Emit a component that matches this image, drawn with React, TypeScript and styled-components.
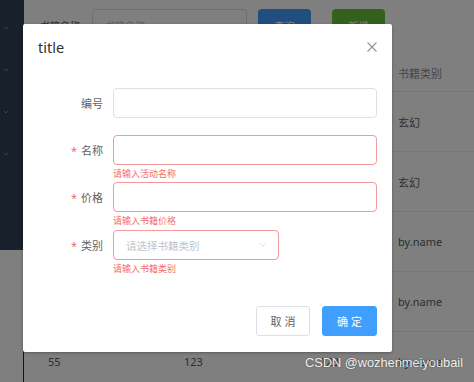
import * as React from "react";
import styled, { createGlobalStyle } from "styled-components";
import { ChevronDown } from "lucide-react";

const GlobalStyle = createGlobalStyle`
    html, body {
        margin: 0;
        padding: 0;
        width: 474px;
        height: 382px;
        overflow: hidden;
        font-family: "Noto Sans", "Noto Sans CJK SC", sans-serif;
    }
`;

const Page = styled.div`
    position: relative;
    display: flex;
    width: 474px;
    height: 382px;
    background: #ffffff;
    overflow: hidden;
`;

const Sidebar = styled.div`
    width: 24px;
    height: 250px;
    flex: none;
    background: #304156;
    display: flex;
    flex-direction: column;
    padding-top: 7px;
    box-sizing: border-box;
`;

const MenuItem = styled.div`
    height: 42px;
    display: flex;
    align-items: center;
    justify-content: flex-end;
    padding-right: 14px;
    color: #bfcbd9;
`;

const Main = styled.div`
    flex: 1;
    display: flex;
    flex-direction: column;
    min-width: 0;
`;

const Toolbar = styled.div`
    display: flex;
    align-items: center;
    padding: 9px 0 0 16px;
    height: 32px;
`;

const ToolLabel = styled.span`
    font-size: 10px;
    color: #606266;
    width: 52px;
`;

const ToolInput = styled.div`
    width: 155px;
    height: 32px;
    box-sizing: border-box;
    border: 1px solid #dcdfe6;
    border-radius: 4px;
    font-size: 10px;
    color: #c0c4cc;
    display: flex;
    align-items: center;
    padding-left: 12px;
`;

const ToolButton = styled.div<{ $color: string; $gap: number }>`
    margin-left: ${(p) => p.$gap}px;
    width: 53px;
    height: 32px;
    border-radius: 4px;
    background: ${(p) => p.$color};
    color: #fff;
    font-size: 10px;
    display: flex;
    align-items: center;
    justify-content: center;
`;

const Table = styled.div`
    margin-top: 14px;
    border-left: 1px solid #2a2a2a;
    margin-left: -1px;
    font-size: 11px;
    color: #606266;
`;

const Row = styled.div<{ $height: number }>`
    display: grid;
    grid-template-columns: 136px 136px 78px 1fr;
    height: ${(p) => p.$height}px;
    align-items: center;
    border-bottom: 1px solid #ebeef5;
    box-sizing: border-box;
`;

const Cell = styled.div<{ $head?: boolean }>`
    padding-left: 24px;
    white-space: nowrap;
    color: ${(p) => (p.$head ? "#8a8c91" : "#5a5c60")};
`;

const Overlay = styled.div`
    position: absolute;
    inset: 0;
    background: rgba(0, 0, 0, 0.5);
`;

const Dialog = styled.div`
    position: absolute;
    left: 23px;
    top: 24px;
    width: 369px;
    height: 328px;
    background: #fff;
    border-radius: 2px;
    box-shadow: 0 1px 3px rgba(0, 0, 0, 0.3);
    display: flex;
    flex-direction: column;
    box-sizing: border-box;
    padding: 0 15px 16px;
`;

const Header = styled.div`
    display: flex;
    align-items: center;
    justify-content: space-between;
    padding-top: 13px;
    height: 20px;
`;

const Title = styled.span`
    font-size: 14.5px;
    line-height: 20px;
    color: #303133;
`;

const Close = styled.svg`
    width: 10px;
    height: 10px;
    stroke: #909399;
    stroke-width: 1.1;
`;

const Form = styled.div`
    margin-top: 31px;
    display: flex;
    flex-direction: column;
`;

const FormItem = styled.div<{ $gap: number }>`
    display: flex;
    align-items: center;
    margin-bottom: ${(p) => p.$gap}px;
`;

const Label = styled.label`
    width: 75px;
    padding-right: 10px;
    box-sizing: border-box;
    text-align: right;
    font-size: 11px;
    color: #606266;
`;

const Star = styled.span`
    color: #f56c6c;
    margin-right: 4px;
`;

const Control = styled.div`
    position: relative;
    flex: 1;
`;

const Input = styled.div<{ $error?: boolean; $width?: number }>`
    height: 30px;
    width: ${(p) => (p.$width ? `${p.$width}px` : "100%")};
    box-sizing: border-box;
    border: 1px solid ${(p) => (p.$error ? "#f39a9a" : "#dcdfe6")};
    border-radius: 4px;
    display: flex;
    align-items: center;
    justify-content: space-between;
    padding: 0 10px 0 12px;
`;

const Placeholder = styled.span`
    font-size: 10.5px;
    color: #c0c4cc;
`;

const ErrorText = styled.div`
    position: absolute;
    left: 0;
    top: calc(100% + 4px);
    font-size: 9px;
    line-height: 10px;
    color: #f56c6c;
    white-space: nowrap;
`;

const Footer = styled.div`
    margin-top: auto;
    display: flex;
    justify-content: flex-end;
    gap: 12px;
`;

const Button = styled.div<{ $primary?: boolean }>`
    width: ${(p) => (p.$primary ? 55 : 54)}px;
    height: 30px;
    box-sizing: border-box;
    border-radius: 3px;
    border: 1px solid ${(p) => (p.$primary ? "#409eff" : "#dcdfe6")};
    background: ${(p) => (p.$primary ? "#409eff" : "#fff")};
    color: ${(p) => (p.$primary ? "#fff" : "#606266")};
    font-size: 11px;
    display: flex;
    align-items: center;
    justify-content: center;
    white-space: pre;
`;

const Watermark = styled.div`
    position: absolute;
    right: 11px;
    bottom: 12px;
    font-family: "Liberation Sans", Arial, sans-serif;
    font-size: 12.8px;
    color: rgba(255, 255, 255, 0.9);
    text-shadow: 0 0 2px rgba(0, 0, 0, 0.35);
`;

// rows hidden behind the dialog only show their last column
const rows = [
    ["", "", "", "玄幻"],
    ["", "", "", "玄幻"],
    ["", "", "", "by.name"],
    ["", "", "", "by.name"],
    ["55", "123", "123", "by.name"],
];

const App = () => {
    return (
        <>
            <GlobalStyle />
            <Page>
                <Sidebar>
                    {[0, 1, 2, 3].map((i) => (
                        <MenuItem key={i}>
                            <ChevronDown size={8} strokeWidth={1.5} />
                        </MenuItem>
                    ))}
                </Sidebar>
                <Main>
                    <Toolbar>
                        <ToolLabel>书籍名称</ToolLabel>
                        <ToolInput>书籍名称</ToolInput>
                        <ToolButton $color="#409eff" $gap={11}>
                            查询
                        </ToolButton>
                        <ToolButton $color="#67c23a" $gap={21}>
                            新增
                        </ToolButton>
                    </Toolbar>
                    <Table>
                        <Row $height={37}>
                            <Cell $head>编号</Cell>
                            <Cell $head>书籍名称</Cell>
                            <Cell $head>价格</Cell>
                            <Cell $head>书籍类别</Cell>
                        </Row>
                        {rows.map((r, i) => (
                            <Row key={i} $height={60}>
                                {r.map((c, j) => (
                                    <Cell key={j}>{c}</Cell>
                                ))}
                            </Row>
                        ))}
                    </Table>
                </Main>
                <Overlay />
                <Dialog>
                    <Header>
                        <Title>title</Title>
                        <Close viewBox="0 0 10 10">
                            <line x1="0.5" y1="0.5" x2="9.5" y2="9.5" />
                            <line x1="9.5" y1="0.5" x2="0.5" y2="9.5" />
                        </Close>
                    </Header>
                    <Form>
                        <FormItem $gap={17}>
                            <Label>编号</Label>
                            <Control>
                                <Input />
                            </Control>
                        </FormItem>
                        <FormItem $gap={17}>
                            <Label>
                                <Star>*</Star>名称
                            </Label>
                            <Control>
                                <Input $error />
                                <ErrorText>请输入活动名称</ErrorText>
                            </Control>
                        </FormItem>
                        <FormItem $gap={18}>
                            <Label>
                                <Star>*</Star>价格
                            </Label>
                            <Control>
                                <Input $error />
                                <ErrorText>请输入书籍价格</ErrorText>
                            </Control>
                        </FormItem>
                        <FormItem $gap={0}>
                            <Label>
                                <Star>*</Star>类别
                            </Label>
                            <Control>
                                <Input $error $width={166}>
                                    <Placeholder>请选择书籍类别</Placeholder>
                                    <ChevronDown size={10} color="#c0c4cc" strokeWidth={1.5} />
                                </Input>
                                <ErrorText>请输入书籍类别</ErrorText>
                            </Control>
                        </FormItem>
                    </Form>
                    <Footer>
                        <Button>取 消</Button>
                        <Button $primary>确 定</Button>
                    </Footer>
                </Dialog>
                <Watermark>CSDN @wozhenmeiyoubail</Watermark>
            </Page>
        </>
    );
};

export default App;
